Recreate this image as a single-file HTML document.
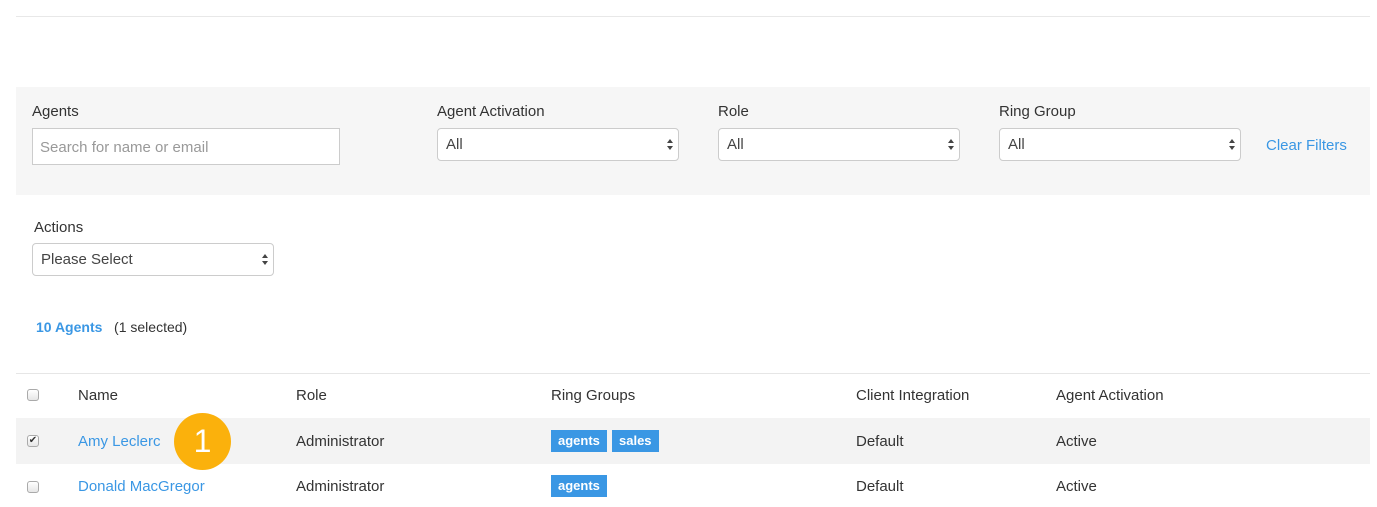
<!DOCTYPE html>
<html><head><meta charset="utf-8"><style>
*{box-sizing:border-box;margin:0;padding:0}
body{width:1377px;height:507px;overflow:hidden;background:#fff;font-family:"Liberation Sans",sans-serif;font-size:15px;color:#333;position:relative}
.a{position:absolute}
.lbl{font-size:15px;color:#333}
.sel{position:absolute;height:33px;border:1px solid #ccc;border-radius:4px;background:#fff;padding:7px 8px;font-size:15px;color:#444}
.sel:after{content:"";position:absolute;right:5px;top:10px;width:0;height:0;border-left:3.5px solid transparent;border-right:3.5px solid transparent;border-bottom:4px solid #444}
.sel:before{content:"";position:absolute;right:5px;top:17px;width:0;height:0;border-left:3.5px solid transparent;border-right:3.5px solid transparent;border-top:4px solid #444}
.cb{position:absolute;width:12px;height:12px;border:1px solid #aaa;border-radius:3px;background:linear-gradient(#fff,#e6e6e6)}
.tag{position:absolute;background:#3a97e4;color:#fff;font-weight:bold;font-size:13px;height:22px;line-height:22px;padding:0 7px}
.blue{color:#3a97e4}
</style></head><body>
<div class="a" style="left:16px;top:16px;width:1354px;height:1px;background:#e8e8e8"></div>
<div class="a" style="left:16px;top:87px;width:1354px;height:108px;background:#f6f6f6"></div>
<div class="a lbl" style="left:32px;top:103px">Agents</div>
<div class="a" style="left:32px;top:128px;width:308px;height:37px;border:1px solid #ccc;background:#fff;padding:10px 7px;color:#999">Search for name or email</div>
<div class="a lbl" style="left:437px;top:103px">Agent Activation</div>
<div class="sel" style="left:437px;top:128px;width:242px">All</div>
<div class="a lbl" style="left:718px;top:103px">Role</div>
<div class="sel" style="left:718px;top:128px;width:242px">All</div>
<div class="a lbl" style="left:999px;top:103px">Ring Group</div>
<div class="sel" style="left:999px;top:128px;width:242px">All</div>
<div class="a blue" style="left:1266px;top:137px">Clear Filters</div>
<div class="a lbl" style="left:34px;top:219px">Actions</div>
<div class="sel" style="left:32px;top:243px;width:242px">Please Select</div>
<div class="a" style="left:36px;top:319px;font-size:14px"><b class="blue">10 Agents</b>&nbsp;&nbsp;&nbsp;(1 selected)</div>
<div class="a" style="left:16px;top:373px;width:1354px;height:1px;background:#e6e6e6"></div>
<div class="cb" style="left:27px;top:389px"></div>
<div class="a" style="left:78px;top:387px">Name</div>
<div class="a" style="left:296px;top:387px">Role</div>
<div class="a" style="left:551px;top:387px">Ring Groups</div>
<div class="a" style="left:856px;top:387px">Client Integration</div>
<div class="a" style="left:1056px;top:387px">Agent Activation</div>
<div class="a" style="left:16px;top:418px;width:1354px;height:46px;background:#f3f3f3"></div>
<div class="cb" style="left:27px;top:435px;font-size:10px;line-height:10px;text-align:center">✔</div>
<div class="a blue" style="left:78px;top:433px">Amy Leclerc</div>
<div class="a" style="left:174px;top:413px;width:57px;height:57px;border-radius:50%;background:#fbb10c;color:#fff;font-size:32px;text-align:center;line-height:57px">1</div>
<div class="a" style="left:296px;top:433px">Administrator</div>
<div class="tag" style="left:551px;top:430px">agents</div>
<div class="tag" style="left:612px;top:430px">sales</div>
<div class="a" style="left:856px;top:433px">Default</div>
<div class="a" style="left:1056px;top:433px">Active</div>
<div class="cb" style="left:27px;top:481px"></div>
<div class="a blue" style="left:78px;top:478px">Donald MacGregor</div>
<div class="a" style="left:296px;top:478px">Administrator</div>
<div class="tag" style="left:551px;top:475px">agents</div>
<div class="a" style="left:856px;top:478px">Default</div>
<div class="a" style="left:1056px;top:478px">Active</div>
</body></html>
